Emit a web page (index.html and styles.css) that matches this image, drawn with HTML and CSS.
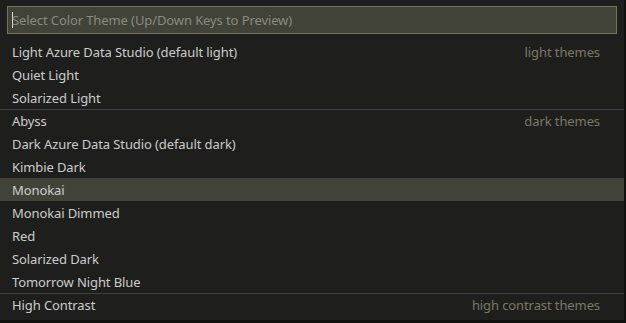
FILE: index.html
```html
<!DOCTYPE html>
<html lang="en">
<head>
    <meta charset="UTF-8">
    <title>Select Color Theme</title>
    <link rel="stylesheet" href="styles.css">
</head>
<body>
    <div class="picker">
        <div class="input">
            <span class="caret"></span>
            <span class="placeholder">Select Color Theme (Up/Down Keys to Preview)</span>
        </div>
        <ul class="list">
            <li class="row"><span>Light Azure Data Studio (default light)</span><span class="group">light themes</span></li>
            <li class="row"><span>Quiet Light</span></li>
            <li class="row"><span>Solarized Light</span></li>
            <li class="row sep"><span>Abyss</span><span class="group">dark themes</span></li>
            <li class="row"><span>Dark Azure Data Studio (default dark)</span></li>
            <li class="row"><span>Kimbie Dark</span></li>
            <li class="row active"><span>Monokai</span></li>
            <li class="row"><span>Monokai Dimmed</span></li>
            <li class="row"><span>Red</span></li>
            <li class="row"><span>Solarized Dark</span></li>
            <li class="row"><span>Tomorrow Night Blue</span></li>
            <li class="row sep"><span>High Contrast</span><span class="group">high contrast themes</span></li>
        </ul>
    </div>
</body>
</html>
```

FILE: styles.css
```css
body {
    margin: 0;
    background: #111110;
    font-family: "Noto Sans", "Open Sans", sans-serif;
    font-size: 13px;
    letter-spacing: -0.1px;
}
.picker {
    width: 624px;
    height: 320px;
    background: #1e1f1c;
    padding-top: 6px;
    box-sizing: border-box;
}
.input {
    margin: 0 7px;
    height: 28px;
    box-sizing: border-box;
    border: 1px solid #75715e;
    background: #414339;
    display: flex;
    align-items: center;
    padding-left: 4px;
}
.caret {
    width: 1px;
    height: 16px;
    background: #d8d8d8;
}
.placeholder {
    color: #8a8a80;
    margin-left: -1px;
}
.list {
    list-style: none;
    margin: 6px 0 0;
    padding: 0;
}
.row {
    height: 23px;
    display: flex;
    align-items: center;
    justify-content: space-between;
    padding: 0 24px 0 12px;
    color: #cccccc;
    box-sizing: border-box;
}
.sep {
    border-top: 1px solid #403f4a;
}
.active {
    background: #414339;
}
.group {
    color: #7a7866;
}
```
